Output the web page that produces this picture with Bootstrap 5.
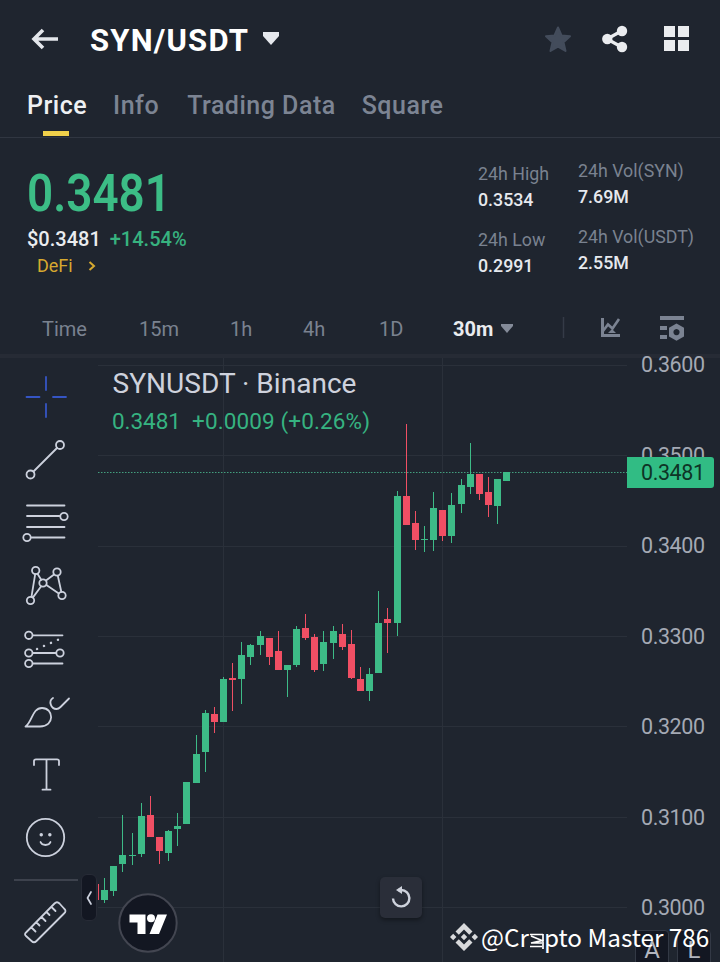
<!DOCTYPE html>
<html lang="en" data-bs-theme="dark">
<head>
<meta charset="utf-8">
<meta name="viewport" content="width=device-width, initial-scale=1">
<title>SYN/USDT</title>
<link href="https://cdn.jsdelivr.net/npm/bootstrap@5.3.0/dist/css/bootstrap.min.css" rel="stylesheet">
<style>
body{background:#1f252f;color:#eaecef;font-family:Roboto,"Liberation Sans",sans-serif;width:720px;height:962px;overflow:hidden}
svg{display:block;flex:none}
.topbar{height:80px;padding:0 31px 3px 30px}
.pair{font-size:31px;font-weight:700;line-height:36px;color:#fff;letter-spacing:1.2px;margin-left:30px;padding-top:4px}
.tabs{height:58px;padding:9px 27px 0;border-bottom:1px solid #303641;gap:26px}
.tabs a{color:#7c8493;font-size:25px;font-weight:500;line-height:34px;letter-spacing:.5px;text-decoration:none;height:48px;display:block;white-space:nowrap}
.tabs a.current{color:#eef0f3}
.tabs a.current::after{content:"";display:block;width:26px;height:5px;background:#f0d04a;margin:8px auto 0;position:relative;left:-1px}
.tabs a:nth-child(2){margin-right:2px}
.summary{height:164px;padding-left:27px}
.last{font-size:51.5px;font-weight:600;line-height:56px;color:#3cbd86;transform:scaleX(.89);transform-origin:0 0;white-space:nowrap}
.sub{font-size:20px;font-weight:500;line-height:26px;white-space:nowrap;margin-top:4px}
.up{color:#37b27f}
.zone{font-size:18px;line-height:24px;color:#d6a92f;padding-left:10px;margin-top:2px}
.stat{line-height:26px;font-size:17.8px;color:#7a8290;white-space:nowrap;height:66px}
.stat b{display:block;font-weight:500;color:#e6e9ee}
.colA{width:100px;padding-top:23px}
.colB{width:142px;padding-top:20px}
.frames{height:52px;color:#7a8290;font-size:20px;border:0}
.frames span{line-height:50px;padding-top:2px;white-space:nowrap}
.frames .chosen{color:#eaecef;font-weight:700}
.band{height:4px;background:#262b35}
.stage{height:604px}
.rail{width:98px;padding-top:8px;position:relative}
.rail svg{fill:none;stroke:#ccd1dd;stroke-width:1.8;stroke-linecap:round;stroke-linejoin:round}
.rail hr{width:64px;height:2px;margin:9px 0 9px 14px;background:#3d424d;border:0;opacity:1}
.plot{font-family:Roboto,sans-serif;overflow:visible}
.fold{position:absolute;left:81px;top:516px;width:16px;height:47px;border-radius:6px;background:#131722;border:1px solid #272b36}
.tv{position:absolute;left:118px;top:893px}
.again{position:absolute;left:380px;top:877px;width:42px;height:41px;border-radius:5px;background:#2a2e39;box-shadow:0 2px 4px #0006}
.axisbtn{position:absolute;top:930px;width:34px;height:40px;border:1px solid #333945;border-radius:4px;background:#131722;color:#b2b5be;font-size:24px;line-height:38px;text-align:center}
.byline{position:absolute;left:450px;top:920px;height:34px;color:#fff;font:24.300px/34px "Noto Sans CJK SC","Noto Sans",sans-serif;white-space:nowrap}
</style>
<script src="https://cdn.jsdelivr.net/npm/bootstrap@5.3.0/dist/js/bootstrap.bundle.min.js"></script>
</head>
<body class="position-relative">
<header class="topbar d-flex align-items-center">
  <svg width="30" height="24" viewBox="0 0 30 24" fill="none" stroke="#e3e6eb" stroke-width="3.6"><path d="M28 12H4M13 3L4 12l9 9"/></svg>
  <span class="pair">SYN/USDT</span>
  <svg style="margin-left:14px" width="16" height="13" viewBox="0 0 16 13" fill="#e6e9ee"><path d="M0 0h16v4l-8 9-8-9z"/></svg>
  <div class="ms-auto d-flex align-items-center">
    <svg width="28" height="28" viewBox="0 0 28 28" fill="#434c5b" stroke="#434c5b" stroke-width="2" stroke-linejoin="round"><path d="M14 2.500l3.500 8 8.500.8-6.500 6 2 8.700L14 21.700 6.500 26l2-8.700-6.500-6 8.500-.8z"/></svg>
    <svg style="margin-left:29px" width="28" height="28" viewBox="0 0 28 28" fill="#eaecef"><path d="M20.500 6L6 14l14.500 8" fill="none" stroke="#eaecef" stroke-width="3.200"/><circle cx="21" cy="6" r="5.200"/><circle cx="6.300" cy="14" r="5.200"/><circle cx="21" cy="22" r="5.200"/></svg>
    <svg style="margin-left:35px" width="25" height="25" viewBox="0 0 25 25" fill="#eaecef"><path d="M0 0h11v11H0zM14 0h11v11H14zM0 14h11v11H0zM14 14h11v11H14z"/></svg>
  </div>
</header>
<nav class="tabs d-flex">
  <a class="current" href="#">Price</a><a href="#">Info</a><a href="#">Trading Data</a><a href="#">Square</a>
</nav>
<section class="summary d-flex">
  <div class="flex-grow-1 pt-4">
    <div class="last mt-1">0.3481</div>
    <div class="sub d-flex"><span>$0.3481</span><span class="up" style="margin-left:9px">+14.54%</span></div>
    <div class="zone d-flex align-items-center">DeFi
      <svg style="margin-left:15px" width="8" height="10" viewBox="0 0 8 10" fill="none" stroke="#d6a92f" stroke-width="2"><path d="M1.500 1l4.500 4-4.500 4"/></svg></div>
  </div>
  <div class="colA"><div class="stat">24h High<b>0.3534</b></div><div class="stat">24h Low<b>0.2991</b></div></div>
  <div class="colB"><div class="stat">24h Vol(SYN)<b>7.69M</b></div><div class="stat">24h Vol(USDT)<b>2.55M</b></div></div>
</section>
<div class="frames d-flex align-items-center">
  <span style="margin-left:42px;width:97px">Time</span><span style="width:91px">15m</span><span style="width:73px">1h</span><span style="width:76px">4h</span><span style="width:74px">1D</span>
  <span class="chosen">30m</span>
  <svg style="margin-left:8px" width="12" height="9" viewBox="0 0 12 9" fill="#848b99"><path d="M0 0h12v2L6 9 0 2z"/></svg>
  <svg class="ms-auto" width="158" height="40" viewBox="562 308 158 40">
    <path d="M563.500 317v21" stroke="#343b47" stroke-width="1.500"/>
    <g fill="none" stroke="#7b8392" stroke-width="3"><path d="M602.500 318v17.500H620"/><path d="M603 331l5-6.500 4.500 4L619 319" stroke-width="2.600"/><path d="M608 333l4-4 4 4z" fill="#7b8392" stroke="none"/></g>
    <g fill="#7b8392"><path d="M660 316h24v4h-24zM660 326h7v4h-7zM660 335h7v4h-7z"/><path fill-rule="evenodd" d="M676.500 323.500l7.500 4.300v8.600l-7.500 4.300-7.500-4.300v-8.600zM676.500 329a3.100 3.100 0 1 0 .010 0z"/></g>
  </svg>
</div>
<div class="band"></div>
<main class="stage d-flex">
  <aside class="rail d-flex flex-column">
    <svg width="92" height="63" viewBox="0 366 92 63" style="stroke:#3555c4"><path d="M46 377v13M46 404v13M26.500 397h13M53 397h13"/></svg>
    <svg width="92" height="63" viewBox="0 429 92 63"><circle cx="60" cy="445" r="4"/><circle cx="30.500" cy="474.500" r="4"/><path d="M57 448L33.500 471.500"/></svg>
    <svg width="92" height="63" viewBox="0 492 92 63"><path d="M27 505.500h37.500M27 516h32.500M27 527h37.500M31.500 537.500h33"/><circle cx="64" cy="516.500" r="3.700"/><circle cx="27" cy="537.500" r="3.700"/></svg>
    <svg width="92" height="63" viewBox="0 555 92 63"><circle cx="35.700" cy="570.500" r="3.700"/><circle cx="57" cy="572" r="3.700"/><circle cx="43" cy="583" r="3.700"/><circle cx="30.500" cy="600.500" r="3.700"/><circle cx="62" cy="595.500" r="3.700"/><path d="M35.200 574.200L31.500 596.700M37.500 573.800l3.700 6M46 580.500l8-6M57.800 575.800l3.500 16M46.400 585l12.400 8.500M41 586.500L33 597.400"/></svg>
    <svg width="92" height="63" viewBox="0 618 92 63"><circle cx="28.800" cy="635.300" r="3.700"/><circle cx="28.800" cy="653" r="3.700"/><circle cx="60" cy="653" r="3.700"/><circle cx="28.800" cy="663.500" r="3.700"/><path d="M33 635.300h29.500M33 653h23M33 663.500h29.500"/><path d="M37 649L61 638.500" stroke-width="2.400" stroke-dasharray=".1 7.500"/></svg>
    <svg width="92" height="63" viewBox="0 681 92 63"><path d="M25.500 726.500c7-4.500 6.500-18.500 16.500-18.500 12 0 13 18.500-2 18.500zM53 698c-5 3-2 11 3.500 11 2 0 3-1 4-2l8.500-8.500"/></svg>
    <svg width="92" height="63" viewBox="0 744 92 63"><path d="M34 765v-4q0-1.700 2-1.700h21q2 0 2 1.700v4M46.500 759.500v30M42.500 789.700h8"/></svg>
    <svg width="92" height="63" viewBox="0 807 92 63"><circle cx="45.500" cy="837.500" r="18.700"/><path d="M40.500 842c1.500 4 8.500 4 10 0"/><path d="M41.200 834.700h.1M49.800 834.700h.1" stroke-width="3.400"/></svg>
    <hr>
    <svg width="92" height="63" viewBox="0 890 92 63"><path d="M26 932.500L54.500 903.500q2.500-2.500 5 0l4.500 5q3 2.500 0 5L36.500 941q-2.500 2.500-5 0L26 936q-2-1.700 0-3.500zM31.500 927.500l4 4M36.500 922.500l3 3M41.500 917l4 4M46.500 912l3 3M51.500 907l4 4"/></svg>
    <div class="fold"><svg width="14" height="45" viewBox="0 0 14 45" style="stroke-width:1.700"><path d="M9 17l-3.500 6L9 29"/></svg></div>
  </aside>
  <svg class="plot" id="plot" width="622" height="604" viewBox="98 358 622 604">
    <path d="M98 365.500h529M98 455.500h529M98 546.500h529M98 636.500h529M98 726.500h529M98 817.500h529M98 907.500h529M223.500 358v604M442.500 358v604" stroke="#2a303a" fill="none"/>
    <path d="M98 472.500h529" stroke="#439f7e" stroke-dasharray="1.500 1.500"/>
    <g id="candles" shape-rendering="crispEdges"></g>
    <text x="112.500" y="393" font-size="28" fill="#ced2dd" textLength="244" lengthAdjust="spacingAndGlyphs">SYNUSDT · Binance</text>
    <g font-size="22.500" fill="#36b381"><text x="112" y="429" textLength="69">0.3481</text><text x="192" y="429" textLength="178">+0.0009 (+0.26%)</text></g>
    <g font-size="21.500" fill="#a4a9b4">
      <text x="641" y="372" textLength="64">0.3600</text><text x="641" y="463" textLength="64">0.3500</text><text x="641" y="553" textLength="64">0.3400</text><text x="641" y="644" textLength="64">0.3300</text><text x="641" y="734" textLength="64">0.3200</text><text x="641" y="825" textLength="64">0.3100</text><text x="641" y="915" textLength="64">0.3000</text>
    </g>
    <path d="M627 457h84q3 0 3 3v25q0 3-3 3h-84z" fill="#31bc84"/>
    <text x="641" y="480" font-size="21.500" fill="#0e3426" textLength="64">0.3481</text>
  </svg>
</main>
<svg class="tv" width="60" height="60" viewBox="0 0 60 60"><circle cx="30" cy="30" r="28.700" fill="#131722" stroke="#434651" stroke-width="2"/><path d="M11.500 21.500h16V41h-8V29.500h-8zM39.500 21.500h9.500L41 41h-9.500z" fill="#fff"/><circle cx="33" cy="25.300" r="4" fill="#fff"/></svg>
<div class="again d-flex align-items-center justify-content-center"><svg width="24" height="26" viewBox="0 0 24 26" fill="none" stroke="#ced2dc" stroke-width="2.400"><path d="M4 13.500a8.200 8.200 0 1 0 8.200-8.500H9"/><path d="M13 1v8L7 5z" fill="#ced2dc" stroke="none"/></svg></div>
<div class="axisbtn" style="left:635px">A</div><div class="axisbtn" style="left:677px">L</div>
<div class="byline d-flex align-items-center">
  <svg width="28" height="28" viewBox="0 0 28 28" fill="#d9dadc"><path d="M14 0l8.500 8.500-3.300 3.300L14 6.600l-5.200 5.200-3.300-3.300zM14 28l8.500-8.500-3.300-3.300-5.200 5.200-5.200-5.200-3.300 3.300zM3.200 10.800L6.400 14l-3.200 3.200L0 14zM24.800 10.800L28 14l-3.200 3.200-3.200-3.200zM14 10.800l3.200 3.200-3.200 3.200-3.200-3.200z"/></svg>
  <span style="margin-left:3px">@Cr</span><svg style="margin-left:1px" width="14" height="24" viewBox="0 0 14 24" fill="none" stroke="#fff" stroke-width="1.700"><path d="M0 9.500h13M1 11l11 4.500-11 2.500h11M0 21.500h12M13 9v15"/></svg><span>pto Master 786</span>
</div>
<script>
// x centre, high, body top, body bottom, low, direction (1 up, 0 down)
const rows=[[104,878,890,900,903,1],[113,866,866,891,896,1],[122,815,855,864,872,1],[132,833,855,856,865,1],[141,803,816,854,857,1],[150,796,815,837,837,0],[159,837,837,851,864,0],[168,830,831,853,861,1],[177,813,826,829,846,1],[186,782,782,824,824,1],[196,735,754,783,783,1],[205,710,713,752,772,1],[214,707,714,722,733,0],[223,677,679,722,722,1],[232,663,678,680,711,0],[241,642,655,679,704,1],[250,644,645,657,665,1],[260,631,636,645,655,1],[269,638,638,657,665,0],[278,631,651,670,670,0],[287,665,665,670,697,1],[296,626,629,665,667,1],[305,614,628,638,640,0],[314,634,637,670,672,0],[323,631,642,664,671,1],[333,626,631,643,659,1],[342,624,634,647,650,0],[351,630,644,678,679,0],[360,667,679,691,691,0],[369,668,674,691,701,1],[378,591,623,673,673,1],[387,608,619,623,653,0],[397,491,496,623,636,1],[406,424,496,525,525,0],[415,511,523,540,550,0],[424,526,539,540,552,1],[433,492,508,540,551,1],[442,510,510,536,541,0],[451,493,505,536,543,1],[461,479,485,504,513,1],[470,443,474,487,494,1],[479,474,474,494,500,0],[488,477,492,505,517,0],[497,479,479,506,524,1],[506,472,472,481,481,1]];
let out='<rect x="98" y="884" width="1" height="16" fill="#ef4f63"/>';
for(const [x,h,t,b,l,u] of rows){
  const c=u?'#3dbb87':'#f04f64';
  out+=`<rect x="${x}" y="${h}" width="1" height="${l-h}" fill="${c}"/><rect x="${x-3}" y="${t}" width="7" height="${b-t}" fill="${c}"/>`;
}
document.getElementById('candles').innerHTML=out;
</script>
</body>
</html>
